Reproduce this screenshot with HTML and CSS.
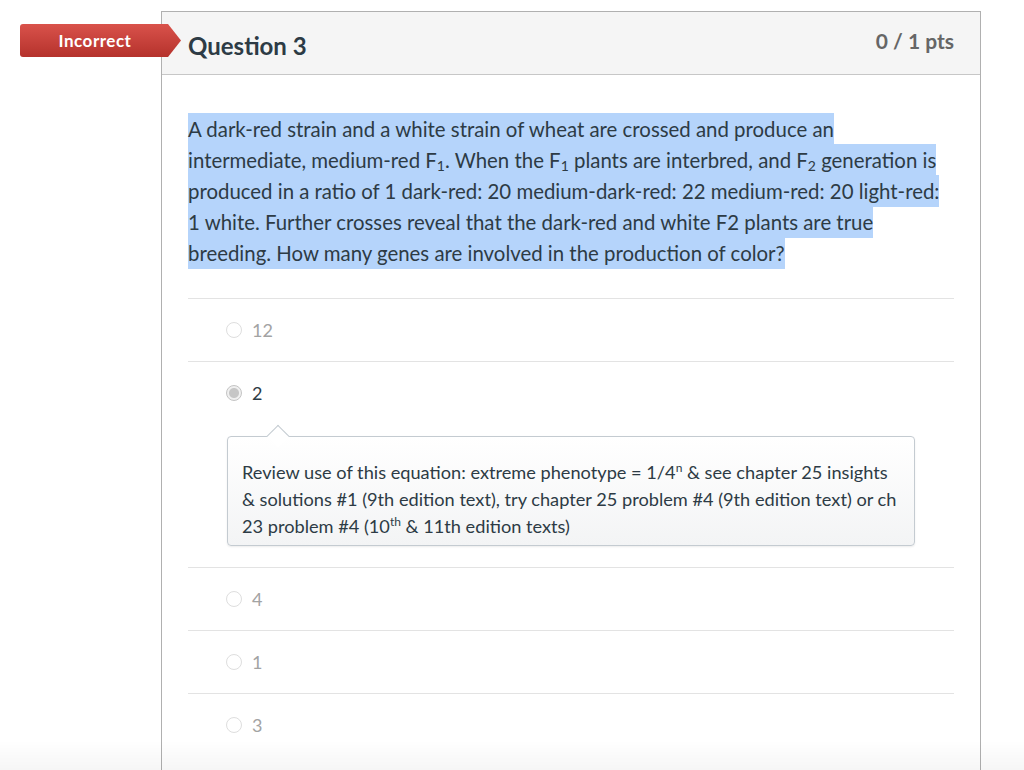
FILE: index.html
```html
<!DOCTYPE html>
<html lang="en">
<head>
<meta charset="utf-8">
<title>Question 3</title>
<link rel="stylesheet" href="styles.css">
</head>
<body>
<div class="page">
  <div class="card">
    <div class="badge">Incorrect</div>
    <div class="header">
      <h2 class="title">Question 3</h2>
      <span class="pts">0 / 1 pts</span>
    </div>
    <div class="body">
      <p class="qtext"><span class="sel">A dark-red strain and a white strain of wheat are crossed and produce an intermediate, medium-red F<sub>1</sub>. When the F<sub>1</sub> plants are interbred, and F<sub>2</sub> generation is produced in a ratio of 1 dark-red: 20 medium-dark-red: 22 medium-red: 20 light-red: 1 white. Further crosses reveal that the dark-red and white F2 plants are true breeding. How many genes are involved in the production of color?</span></p>
      <div class="answers">
        <div class="answer">
          <div class="choice"><span class="radio"></span><span class="label">12</span></div>
        </div>
        <div class="answer answer-selected">
          <div class="choice"><span class="radio radio-on"></span><span class="label label-on">2</span></div>
          <div class="feedback">Review use of this equation: extreme phenotype = 1/4<sup>n</sup> &amp; see chapter 25 insights &amp; solutions #1 (9th edition text), try chapter 25 problem #4 (9th edition text) or ch 23 problem #4 (10<sup>th</sup> &amp; 11th edition texts)</div>
        </div>
        <div class="answer">
          <div class="choice"><span class="radio"></span><span class="label">4</span></div>
        </div>
        <div class="answer">
          <div class="choice"><span class="radio"></span><span class="label">1</span></div>
        </div>
        <div class="answer">
          <div class="choice"><span class="radio"></span><span class="label">3</span></div>
        </div>
      </div>
    </div>
  </div>
</div>
</body>
</html>
```

FILE: styles.css
```css
html, body {
  margin: 0;
  padding: 0;
  background: #ffffff;
}

body {
  font-family: Lato, "Open Sans", "Liberation Sans", sans-serif;
  color: #2d3b45;
}

body::after {
  content: "";
  position: fixed;
  left: 0;
  right: 0;
  bottom: 0;
  height: 30px;
  background: linear-gradient(to bottom, rgba(0, 0, 0, 0), rgba(0, 0, 0, 0.035));
  pointer-events: none;
}

.page {
  padding-top: 11px;
}

.card {
  position: relative;
  margin-left: 161px;
  width: 818px;
  border: 1px solid #b0b0b0;
  border-bottom: none;
  background: #ffffff;
  min-height: 780px;
}

.badge {
  position: absolute;
  left: -142px;
  top: 12px;
  width: 161px;
  height: 33px;
  box-sizing: border-box;
  padding-left: 2px;
  padding-right: 13px;
  border-radius: 3px 0 0 3px;
  background: linear-gradient(to bottom, #d9524b, #b5322c);
  clip-path: polygon(0 0, calc(100% - 13px) 0, 100% 50%, calc(100% - 13px) 100%, 0 100%);
  color: #ffffff;
  font-size: 17px;
  font-weight: 700;
  letter-spacing: 0.5px;
  line-height: 33px;
  text-align: center;
}

.header {
  display: flex;
  justify-content: space-between;
  align-items: flex-start;
  height: 62px;
  padding: 0 26px;
  background: #f5f5f5;
  border-bottom: 1px solid #c7c7c7;
}

.title {
  margin: 0;
  padding-top: 20px;
  font-size: 24px;
  font-weight: 700;
  line-height: 28px;
  color: #2d3b45;
}

.pts {
  padding-top: 16px;
  font-size: 21px;
  font-weight: 700;
  line-height: 26px;
  color: #666666;
}

.body {
  padding: 39px 26px 0 26px;
}

.qtext {
  margin: 0;
  width: 766px;
  font-size: 20.4px;
  line-height: 31px;
  color: #2d3b45;
}

.sel {
  background: #b5d4fb;
  padding: 4px 0;
}

.qtext sub {
  font-size: 14px;
  line-height: 0;
  vertical-align: -3px;
}

.answers {
  margin-top: 29px;
}

.answer {
  border-top: 1px solid #e3e3e3;
}

.choice {
  display: flex;
  align-items: center;
  height: 62px;
  padding-left: 38px;
  gap: 10px;
}

.radio {
  width: 14px;
  height: 14px;
  border-radius: 50%;
  border: 1px solid #dedede;
  background: #ffffff;
  flex: none;
}

.radio-on {
  border-color: #c4c4c4;
  background: radial-gradient(circle, #c6c6c6 0 4.5px, #f0f0f0 5.5px);
}

.label {
  font-size: 18px;
  color: #a3a3a3;
  line-height: 20px;
}

.label-on {
  color: #2d3b45;
}

.answer-selected {
  padding-bottom: 21px;
}

.feedback {
  position: relative;
  margin-left: 39px;
  margin-top: 12px;
  width: 688px;
  box-sizing: border-box;
  padding: 22px 12px 5px 14px;
  border: 1px solid #c4cbd1;
  border-radius: 4px;
  background: linear-gradient(to bottom, #ffffff, #f3f4f5);
  box-shadow: 0 1px 2px rgba(0, 0, 0, 0.08);
  font-size: 18.2px;
  line-height: 27px;
  color: #2d3b45;
}

.feedback::before {
  content: "";
  position: absolute;
  left: 42px;
  top: -9px;
  width: 15px;
  height: 15px;
  background: #ffffff;
  border-left: 1px solid #c4cbd1;
  border-top: 1px solid #c4cbd1;
  transform: rotate(45deg);
}

.feedback sup {
  font-size: 12px;
  line-height: 0;
  vertical-align: 7px;
}
```
